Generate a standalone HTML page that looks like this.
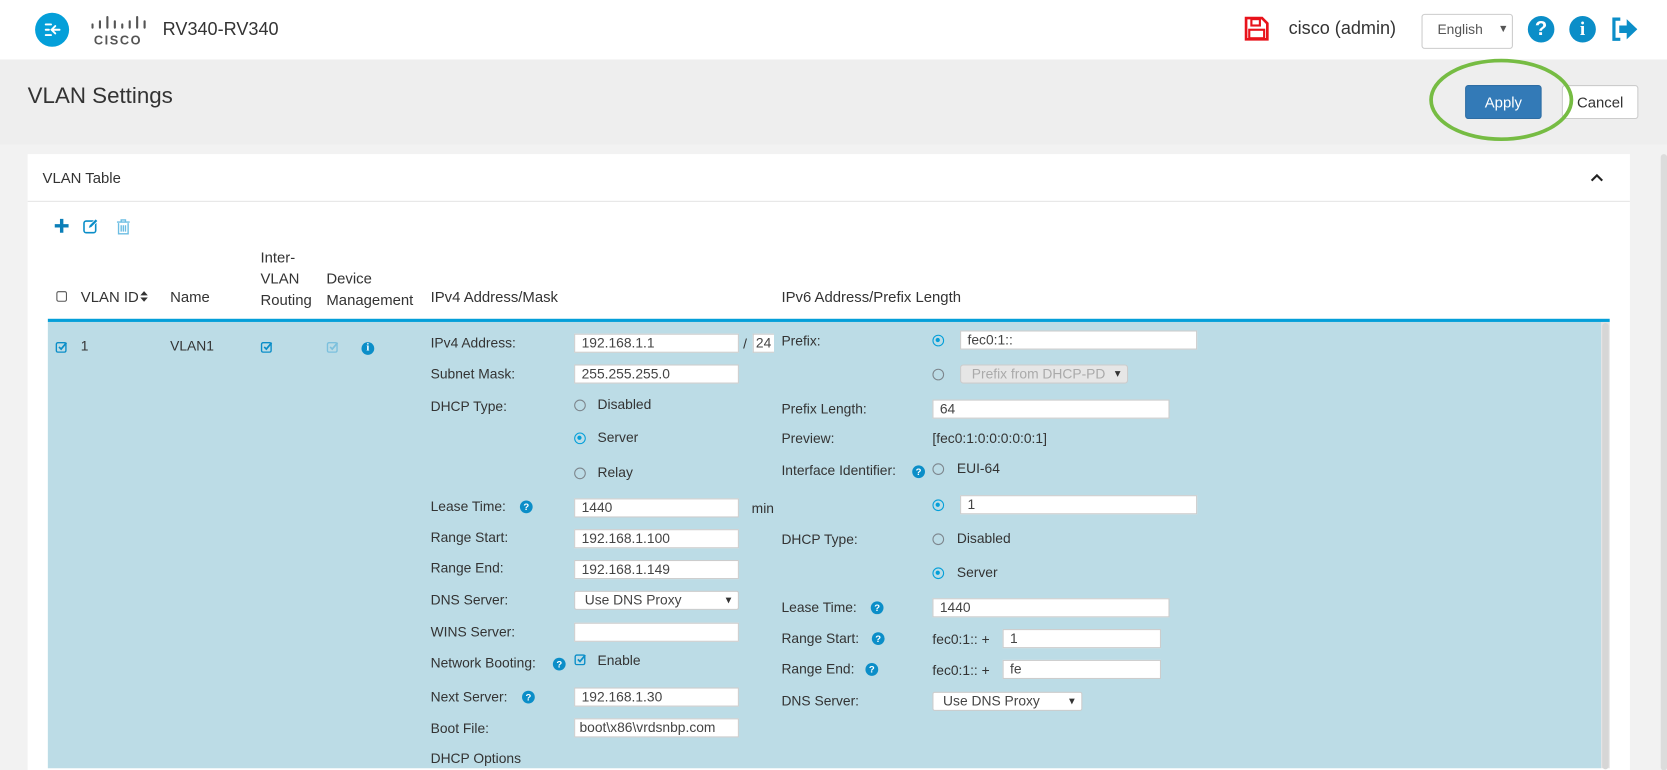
<!DOCTYPE html>
<html><head><meta charset="utf-8"><style>
html,body{margin:0;padding:0;width:1667px;height:764px;overflow:hidden;background:#f2f2f2;}
#w{position:absolute;left:0;top:0;width:1568px;height:719px;transform:scale(1.0632,1.0626);transform-origin:0 0;font-family:"Liberation Sans",sans-serif;color:#333;font-size:13px;}
.a{position:absolute}
.t{position:absolute;line-height:20px;white-space:nowrap}
.in{position:absolute;height:18px;background:#fff;border:1px solid #ccc;box-sizing:border-box;line-height:16px;padding-left:6px;font-size:13px;color:#444;overflow:hidden;white-space:nowrap}
.sel{border-radius:2px}
.sel:after{content:"▾";position:absolute;right:6px;top:0;font-size:11px;color:#333}
.r{position:absolute;width:11px;height:11px;border:1.6px solid #7d868d;border-radius:50%;box-sizing:border-box;margin:-0.5px 0 0 -0.5px}
.r.on{border-color:#049fd9}
.r.on:after{content:"";position:absolute;left:2px;top:2px;width:4px;height:4px;border-radius:50%;background:#049fd9}
.q{position:absolute;width:12px;height:12px;border-radius:50%;background:#0b8ec8;color:#fff;font-weight:bold;font-size:9px;line-height:12px;text-align:center}
.cb{position:absolute;width:11px;height:11px}
</style></head><body><div id="w">
<!-- header -->
<div class="a" style="left:0;top:0;width:1568px;height:56px;background:#fff"></div>
<div class="a" style="left:33px;top:12px;width:32px;height:32px;border-radius:50%;background:#049fd9"></div>
<svg class="a" style="left:33px;top:12px" width="32" height="32"><g stroke="#fff" stroke-width="1.8" fill="none" stroke-linecap="round"><path d="M10 11h5M10 16h3M10 21h5M23 16h-7M19 12.5l-3.5 3.5 3.5 3.5"/></g></svg>
<svg class="a" style="left:86px;top:14px" width="54" height="30"><g stroke="#555" stroke-width="2" stroke-linecap="round"><path d="M2 9v3M9 6v6M16 2v10M23 6v6M30 9v3M37 6v6M44 2v10M51 6v6" transform="translate(-1,0)"/></g><text x="25" y="28" font-family="Liberation Sans" font-weight="bold" font-size="12" fill="#555" text-anchor="middle" letter-spacing="1.5">CISCO</text></svg>
<div class="t" style="left:153px;top:17px;font-size:17px;line-height:22px;color:#333">RV340-RV340</div>
<svg class="a" style="left:1170px;top:15px" width="24" height="24"><path d="M2 2h15l5 5v15H2z" fill="none" stroke="#e8131b" stroke-width="2.5"/><rect x="7" y="3" width="8" height="6" fill="none" stroke="#e8131b" stroke-width="2"/><rect x="5" y="13" width="14" height="8" fill="none" stroke="#e8131b" stroke-width="2"/></svg>
<div class="t" style="left:1212px;top:16px;font-size:17px;line-height:22px">cisco (admin)</div>
<div class="a" style="left:1337px;top:13px;width:86px;height:33px;border:1px solid #ccc;border-radius:3px;box-sizing:border-box;background:#fff"></div>
<div class="t" style="left:1352px;top:18px;font-size:13px;color:#555">English</div>
<div class="t" style="left:1409px;top:18px;font-size:10px;color:#555">▼</div>
<div class="a" style="left:1437px;top:15px;width:25px;height:25px;border-radius:50%;background:#0b8ec8;color:#fff;font-weight:bold;font-size:19px;line-height:25px;text-align:center">?</div>
<div class="a" style="left:1476px;top:15px;width:25px;height:25px;border-radius:50%;background:#0b8ec8;color:#fff;font-weight:bold;font-size:18px;line-height:25px;text-align:center;font-family:'Liberation Serif',serif">i</div>
<svg class="a" style="left:1515px;top:15px" width="26" height="25"><path d="M9 3H3v19h6" fill="none" stroke="#0b8ec8" stroke-width="3"/><path d="M8 9h7V3l10 9.5-10 9.5v-6H8z" fill="#0b8ec8"/></svg>
<!-- gray band -->
<div class="a" style="left:0;top:56px;width:1568px;height:80px;background:#eeeeee"></div>
<div class="t" style="left:26px;top:78px;font-size:21px;line-height:26px;color:#333">VLAN Settings</div>
<div class="a" style="left:1378px;top:80px;width:72px;height:32px;background:#337ab7;border:1px solid #2e6da4;box-sizing:border-box;border-radius:3px;color:#fff;font-size:14px;line-height:30px;text-align:center">Apply</div>
<div class="a" style="left:1469px;top:80px;width:72px;height:32px;background:#fff;border:1px solid #ccc;box-sizing:border-box;border-radius:3px;color:#333;font-size:14px;line-height:30px;text-align:center">Cancel</div>
<svg class="a" style="left:1340px;top:52px" width="145" height="85"><ellipse cx="72" cy="42" rx="66" ry="37" fill="none" stroke="#76bc43" stroke-width="3.5"/></svg>
<!-- panel -->
<div class="a" style="left:26px;top:145px;width:1507px;height:580px;background:#fff"></div>
<div class="a" style="left:1562px;top:145px;width:6px;height:580px;background:#dcdcdc;border-radius:3px"></div>
<div class="t" style="left:40px;top:157px;font-size:14px">VLAN Table</div>
<svg class="a" style="left:1495px;top:162px" width="14" height="10"><path d="M2 8l5-5 5 5" fill="none" stroke="#222" stroke-width="2"/></svg>
<div class="a" style="left:26px;top:189px;width:1507px;height:1px;background:#e5e5e5"></div>
<svg class="a" style="left:50px;top:204px" width="80" height="18"><path d="M8 2v13M1.5 8.5h13" stroke="#0b7fb8" stroke-width="3.2"/><rect x="29" y="4" width="11" height="11" rx="2" fill="none" stroke="#0b8ec8" stroke-width="1.5"/><path d="M33 11l1-3 6-6 2 2-6 6z" fill="#0b8ec8" stroke="#fff" stroke-width="0.7"/><g fill="none" stroke="#6cbde3" stroke-width="1.3"><path d="M60 5h12M64 5V3h4v2M61.5 6v10h9V6M64 8v6M66 8v6M68 8v6"/></g></svg>
<!-- table header -->
<div class="a" style="left:53px;top:274px;width:10px;height:10px;border:1.2px solid #555;border-radius:2px;box-sizing:border-box"></div>
<div class="t" style="left:76px;top:269px;font-size:14px">VLAN ID</div>
<svg class="a" style="left:131px;top:273px" width="9" height="12"><path d="M1 5l3.5-4 3.5 4zM1 7l3.5 4 3.5-4z" fill="#333"/></svg>
<div class="t" style="left:160px;top:269px;font-size:14px">Name</div>
<div class="t" style="left:245px;top:232px;font-size:14px;line-height:20px">Inter-<br>VLAN<br>Routing</div>
<div class="t" style="left:307px;top:252px;font-size:14px;line-height:20px">Device<br>Management</div>
<div class="t" style="left:405px;top:269px;font-size:14px">IPv4 Address/Mask</div>
<div class="t" style="left:735px;top:269px;font-size:14px">IPv6 Address/Prefix Length</div>
<div class="a" style="left:45px;top:300px;width:1469px;height:3px;background:#049fd9"></div>
<div class="a" style="left:45px;top:303px;width:1461px;height:420px;background:#bcdce6"></div>
<div class="a" style="left:1506px;top:303px;width:8px;height:420px;background:#e2e2e2"></div>
<div class="a" style="left:1507px;top:304px;width:6px;height:420px;background:#d6d6d6;border-radius:3px"></div>
<!-- row -->
<svg class="cb" style="left:52px;top:321px" width="12" height="12"><rect x="1" y="1.5" width="9" height="9" rx="1.5" fill="none" stroke="#0b8ec8" stroke-width="1.3"/><path d="M3.5 5.5l2 2 5-6" fill="none" stroke="#0b8ec8" stroke-width="1.6"/></svg>
<div class="t" style="left:76px;top:316px">1</div>
<div class="t" style="left:160px;top:316px">VLAN1</div>
<svg class="cb" style="left:245px;top:321px" width="12" height="12"><rect x="1" y="1.5" width="9" height="9" rx="1.5" fill="none" stroke="#0b8ec8" stroke-width="1.3"/><path d="M3.5 5.5l2 2 5-6" fill="none" stroke="#0b8ec8" stroke-width="1.6"/></svg>
<svg class="cb" style="left:307px;top:321px" width="12" height="12"><rect x="1" y="1.5" width="9" height="9" rx="1.5" fill="none" stroke="#7cc0dd" stroke-width="1.3"/><path d="M3.5 5.5l2 2 5-6" fill="none" stroke="#7cc0dd" stroke-width="1.6"/></svg>
<div class="q" style="left:340px;top:322px;font-family:'Liberation Serif',serif;font-size:10px">i</div>
<!-- left column -->
<div class="t" style="left:405px;top:313px">IPv4 Address:</div>
<div class="in" style="left:540px;top:314px;width:155px">192.168.1.1</div>
<div class="t" style="left:699px;top:314px">/</div>
<div class="in" style="left:708px;top:314px;width:20px;padding-left:2px;border-right:none">24</div>
<div class="t" style="left:405px;top:342px">Subnet Mask:</div>
<div class="in" style="left:540px;top:343px;width:155px">255.255.255.0</div>
<div class="t" style="left:405px;top:373px">DHCP Type:</div>
<div class="r" style="left:540px;top:376px"></div><div class="t" style="left:562px;top:371px">Disabled</div>
<div class="r on" style="left:540px;top:407px"></div><div class="t" style="left:562px;top:402px">Server</div>
<div class="r" style="left:540px;top:440px"></div><div class="t" style="left:562px;top:435px">Relay</div>
<div class="t" style="left:405px;top:467px">Lease Time:</div><div class="q" style="left:489px;top:471px">?</div>
<div class="in" style="left:540px;top:469px;width:155px">1440</div>
<div class="t" style="left:707px;top:469px">min</div>
<div class="t" style="left:405px;top:496px">Range Start:</div>
<div class="in" style="left:540px;top:498px;width:155px">192.168.1.100</div>
<div class="t" style="left:405px;top:525px">Range End:</div>
<div class="in" style="left:540px;top:527px;width:155px">192.168.1.149</div>
<div class="t" style="left:405px;top:555px">DNS Server:</div>
<div class="in sel" style="left:540px;top:556px;width:155px;padding-left:9px">Use DNS Proxy</div>
<div class="t" style="left:405px;top:585px">WINS Server:</div>
<div class="in" style="left:540px;top:586px;width:155px"></div>
<div class="t" style="left:405px;top:614px">Network Booting:</div><div class="q" style="left:520px;top:619px">?</div>
<svg class="cb" style="left:540px;top:615px" width="12" height="12"><rect x="1" y="1.5" width="9" height="9" rx="1.5" fill="none" stroke="#0b8ec8" stroke-width="1.3"/><path d="M3.5 5.5l2 2 5-6" fill="none" stroke="#0b8ec8" stroke-width="1.6"/></svg>
<div class="t" style="left:562px;top:612px">Enable</div>
<div class="t" style="left:405px;top:646px">Next Server:</div><div class="q" style="left:491px;top:650px">?</div>
<div class="in" style="left:540px;top:647px;width:155px">192.168.1.30</div>
<div class="t" style="left:405px;top:676px">Boot File:</div>
<div class="in" style="left:540px;top:676px;width:155px;padding-left:4px">boot\x86\vrdsnbp.com</div>
<div class="t" style="left:405px;top:704px">DHCP Options</div>
<!-- right column -->
<div class="t" style="left:735px;top:311px">Prefix:</div>
<div class="r on" style="left:877px;top:315px"></div>
<div class="in" style="left:903px;top:311px;width:223px">fec0:1::</div>
<div class="r" style="left:877px;top:347px"></div>
<div class="in sel" style="left:903px;top:343px;width:158px;background:#e6e6e6;color:#aaa;padding-left:10px;border-radius:3px">Prefix from DHCP-PD</div>
<div class="t" style="left:735px;top:375px">Prefix Length:</div>
<div class="in" style="left:877px;top:376px;width:223px">64</div>
<div class="t" style="left:735px;top:403px">Preview:</div>
<div class="t" style="left:877px;top:403px">[fec0:1:0:0:0:0:0:1]</div>
<div class="t" style="left:735px;top:433px">Interface Identifier:</div><div class="q" style="left:858px;top:438px">?</div>
<div class="r" style="left:877px;top:436px"></div><div class="t" style="left:900px;top:431px">EUI-64</div>
<div class="r on" style="left:877px;top:470px"></div>
<div class="in" style="left:903px;top:466px;width:223px">1</div>
<div class="t" style="left:735px;top:498px">DHCP Type:</div>
<div class="r" style="left:877px;top:502px"></div><div class="t" style="left:900px;top:497px">Disabled</div>
<div class="r on" style="left:877px;top:534px"></div><div class="t" style="left:900px;top:529px">Server</div>
<div class="t" style="left:735px;top:562px">Lease Time:</div><div class="q" style="left:819px;top:566px">?</div>
<div class="in" style="left:877px;top:563px;width:223px">1440</div>
<div class="t" style="left:735px;top:591px">Range Start:</div><div class="q" style="left:820px;top:595px">?</div>
<div class="t" style="left:877px;top:592px">fec0:1:: +</div>
<div class="in" style="left:943px;top:592px;width:149px">1</div>
<div class="t" style="left:735px;top:620px">Range End:</div><div class="q" style="left:814px;top:624px">?</div>
<div class="t" style="left:877px;top:621px">fec0:1:: +</div>
<div class="in" style="left:943px;top:621px;width:149px">fe</div>
<div class="t" style="left:735px;top:650px">DNS Server:</div>
<div class="in sel" style="left:877px;top:651px;width:141px;padding-left:9px">Use DNS Proxy</div>
</div></body></html>
